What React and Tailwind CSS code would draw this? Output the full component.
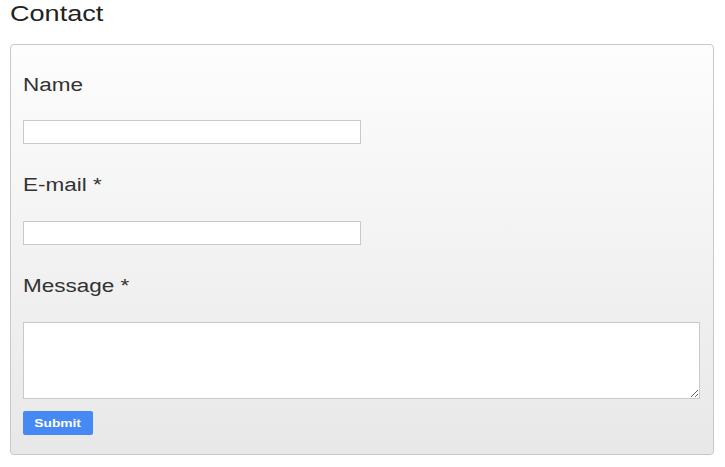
export default function App() {
  const font = { fontFamily: '"Liberation Sans", Arial, sans-serif' };
  return (
    <div className="w-[725px] h-[467px] bg-white overflow-hidden" style={font}>
      <div className="pl-[10px] pt-[1px]">
        <h1 className="text-[22px] leading-[26px] font-normal text-[#222]">
          <span className="inline-block origin-left scale-x-[1.23]">Contact</span>
        </h1>
      </div>
      <div className="ml-[10px] mt-[17px] w-[704px] h-[411px] border border-[#c8c8c8] rounded-[4px] bg-gradient-to-b from-[#fdfdfd] to-[#e8e8e8] pl-[12px] pr-[12px] flex flex-col">
        <label className="mt-[29px] text-[18px] leading-[22px] text-[#333]">
          <span className="inline-block origin-left scale-x-125">Name</span>
        </label>
        <input className="mt-[24px] w-[338px] h-[24px] bg-white border border-[#c9c9c9] outline-none" />
        <label className="mt-[30px] text-[18px] leading-[22px] text-[#333]">
          <span className="inline-block origin-left scale-x-125">E-mail *</span>
        </label>
        <input className="mt-[25px] w-[338px] h-[24px] bg-white border border-[#c9c9c9] outline-none" />
        <label className="mt-[30px] text-[18px] leading-[22px] text-[#333]">
          <span className="inline-block origin-left scale-x-125">Message *</span>
        </label>
        <textarea className="mt-[25px] w-[677px] h-[77px] bg-white border border-[#c9c9c9] outline-none block" />
        <button className="mt-[12px] w-[70px] h-[24px] bg-[#4688f4] rounded-[2px] text-white text-[11px] font-bold leading-[24px] flex items-center justify-center">
          <span className="inline-block scale-x-125">Submit</span>
        </button>
      </div>
    </div>
  );
}
